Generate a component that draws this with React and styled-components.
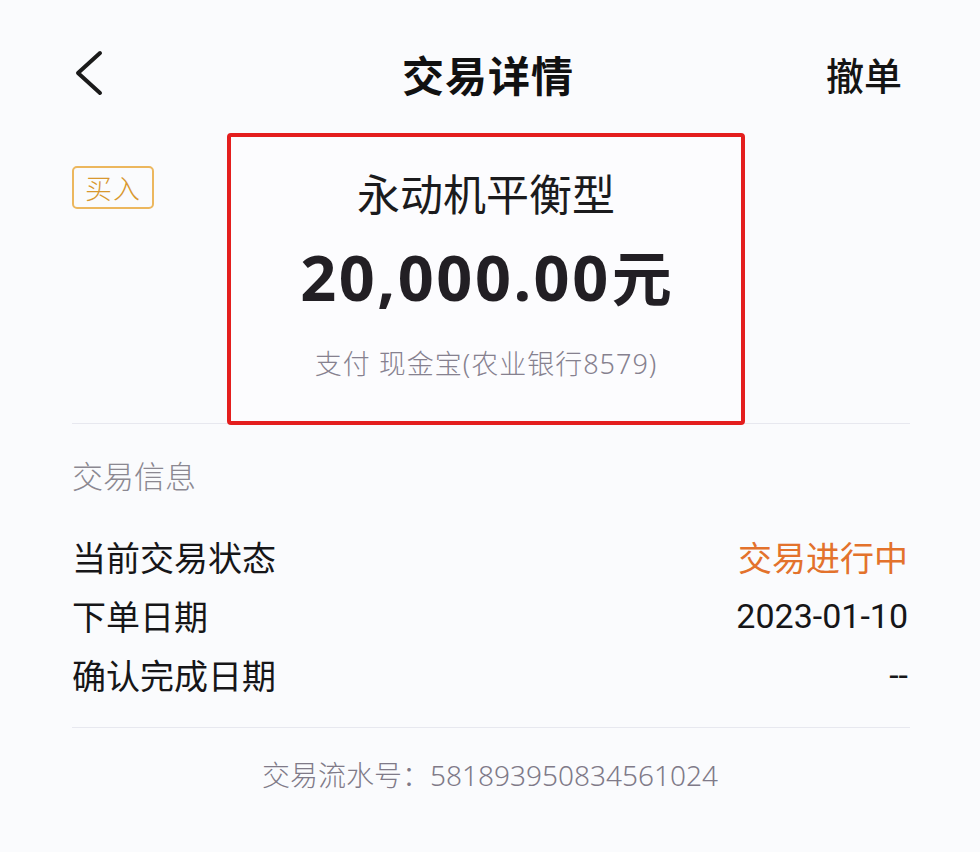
import React from "react";
import styled, { createGlobalStyle } from "styled-components";

const Global = createGlobalStyle`
  html, body { margin: 0; padding: 0; background: #fafbfd; }
  body { font-family: "Noto Sans", "Noto Sans CJK SC", sans-serif; color: #1d1c20; }
`;

const Page = styled.div`
  width: 980px;
  min-height: 852px;
  background: #fafbfd;
  display: flex;
  flex-direction: column;
`;

const Header = styled.header`
  height: 110px;
  margin-top: 18px;
  padding: 0 78px 0 74px;
  display: grid;
  grid-template-columns: 1fr auto 1fr;
  align-items: center;
`;

const BackButton = styled.button`
  border: 0;
  background: none;
  padding: 0;
  width: 34px;
  height: 46px;
  justify-self: start;
  display: flex;
  align-items: center;
  cursor: pointer;
`;

const Title = styled.h1`
  margin: 0;
  font-family: "Noto Sans CJK SC", sans-serif;
  font-size: 42px;
  font-weight: 700;
  letter-spacing: 1px;
  color: #111;
`;

const Action = styled.span`
  justify-self: end;
  font-family: "Noto Sans CJK SC", sans-serif;
  font-size: 38px;
  font-weight: 500;
  color: #141414;
`;

const Hero = styled.section`
  margin: 5px 70px 0 72px;
  display: grid;
  grid-template-columns: 155px 518px 1fr;
  border-bottom: 1px solid #e7e8ef;
`;

const Tag = styled.span`
  justify-self: start;
  align-self: start;
  margin-top: 33px;
  width: 82px;
  height: 43px;
  box-sizing: border-box;
  border: 2px solid #ecb75e;
  border-radius: 5px;
  display: flex;
  align-items: center;
  justify-content: center;
  font-family: "Noto Sans CJK SC", sans-serif;
  font-size: 27px;
  font-weight: 300;
  color: #d8982f;
  letter-spacing: 1px;
`;

const HighlightBox = styled.div`
  height: 292px;
  box-sizing: border-box;
  border: 4px solid #e41e1e;
  border-radius: 4px;
  margin-bottom: -2px;
  display: flex;
  flex-direction: column;
  align-items: center;
  padding-top: 32px;
  background: #fcfcfe;
`;

const Product = styled.div`
  font-family: "Noto Sans CJK SC", sans-serif;
  font-size: 43px;
  line-height: 46px;
  font-weight: 400;
  color: #1b1b1d;
`;

const Amount = styled.div`
  margin-top: 24px;
  font-family: "Noto Sans", "Noto Sans CJK SC", sans-serif;
  font-size: 63px;
  line-height: 72px;
  font-weight: 700;
  color: #221f24;
  letter-spacing: 2.5px;
  display: flex;
  align-items: baseline;
`;

const Unit = styled.span`
  font-family: "Noto Sans CJK SC", sans-serif;
  font-size: 60px;
  margin-left: 1px;
  letter-spacing: 0;
`;

const Payment = styled.div`
  margin-top: 36px;
  font-family: "Noto Sans", "Noto Sans CJK SC", sans-serif;
  font-size: 27px;
  line-height: 30px;
  font-weight: 300;
  letter-spacing: 1px;
  color: #86818f;
`;

const Info = styled.section`
  margin: 0 70px 0 72px;
  padding: 31px 0 23px;
  border-bottom: 1px solid #e7e8ef;
`;

const SectionLabel = styled.div`
  font-family: "Noto Sans CJK SC", sans-serif;
  font-size: 31px;
  line-height: 40px;
  font-weight: 300;
  color: #8b8891;
  margin-bottom: 32px;
`;

const Row = styled.div`
  height: 59px;
  display: flex;
  align-items: center;
  justify-content: space-between;
`;

const RowLabel = styled.span`
  font-family: "Noto Sans CJK SC", sans-serif;
  font-size: 34px;
  font-weight: 400;
  color: #161618;
`;

const RowValue = styled.span`
  font-family: ${(p) => (p.$numeric ? "Roboto, 'Noto Sans CJK SC', sans-serif" : "'Noto Sans CJK SC', sans-serif")};
  font-size: 34px;
  font-weight: 400;
  color: ${(p) => (p.$accent ? "#e3722c" : "#161618")};
  margin-right: 2px;
`;

const Footer = styled.div`
  padding-top: 27px;
  text-align: center;
  font-family: "Noto Sans", "Noto Sans CJK SC", sans-serif;
  font-size: 28px;
  line-height: 40px;
  font-weight: 300;
  color: #7f7a88;
`;

const rows = [
  { label: "当前交易状态", value: "交易进行中", accent: true },
  { label: "下单日期", value: "2023-01-10", numeric: true },
  { label: "确认完成日期", value: "--", numeric: true },
];

export default function App() {
  return (
    <Page>
      <Global />
      <Header>
        <BackButton aria-label="返回">
          <svg width="30" height="46" viewBox="0 0 30 46" fill="none">
            <path d="M26 3 L4 23 L26 43" stroke="#1a1a1a" strokeWidth="4" strokeLinecap="round" strokeLinejoin="round" />
          </svg>
        </BackButton>
        <Title>交易详情</Title>
        <Action>撤单</Action>
      </Header>
      <Hero>
        <Tag>买入</Tag>
        <HighlightBox>
          <Product>永动机平衡型</Product>
          <Amount>
            20,000.00<Unit>元</Unit>
          </Amount>
          <Payment>支付 现金宝(农业银行8579)</Payment>
        </HighlightBox>
      </Hero>
      <Info>
        <SectionLabel>交易信息</SectionLabel>
        {rows.map((r) => (
          <Row key={r.label}>
            <RowLabel>{r.label}</RowLabel>
            <RowValue $accent={r.accent} $numeric={r.numeric}>{r.value}</RowValue>
          </Row>
        ))}
      </Info>
      <Footer>交易流水号：581893950834561024</Footer>
    </Page>
  );
}
